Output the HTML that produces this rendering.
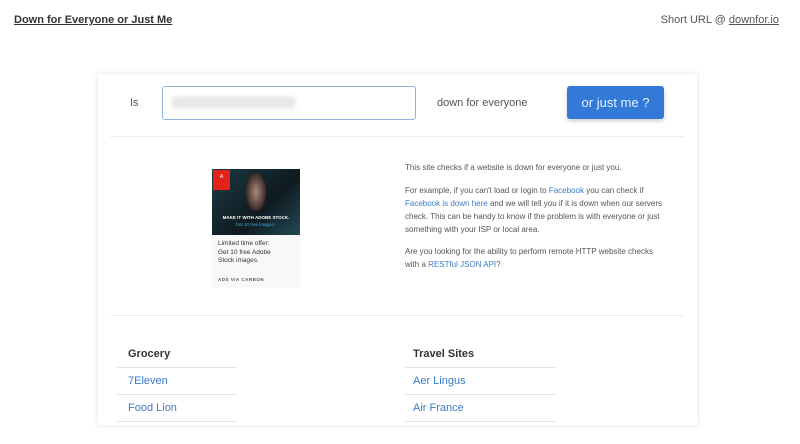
<!DOCTYPE html>
<html><head><meta charset="utf-8"><style>
*{margin:0;padding:0;box-sizing:border-box}
body{width:800px;height:444px;background:#fff;font-family:"Liberation Sans",sans-serif;position:relative;overflow:hidden;color:#444}
.a{position:absolute;white-space:nowrap}
a{color:#3a7bc8;text-decoration:none}
.card{position:absolute;left:98px;top:74px;width:599px;height:351px;background:#fff;box-shadow:0 0 6px rgba(0,0,0,.12)}
.hr{position:absolute;height:1px;background:#eee}
.p{font-size:8px;line-height:13px;color:#555;position:absolute;left:405px;white-space:nowrap}
.li{position:absolute;height:1px;background:#e4e4e4}
</style></head><body>
<div class="a" style="left:14px;top:14px;font-size:11px;font-weight:bold;color:#333;text-decoration:underline">Down for Everyone or Just Me</div>
<div class="a" style="right:21px;top:14px;font-size:11px;color:#555">Short URL @ <span style="text-decoration:underline">downfor.io</span></div>
<div class="card"></div>
<div class="a" style="left:130px;top:97px;font-size:11px;color:#555">Is</div>
<div class="a" style="left:162px;top:86px;width:254px;height:34px;border:1px solid #8fb4e0;border-radius:3px;background:#fff"><div style="position:absolute;left:8px;top:9px;width:125px;height:13px;background:#e8e8e8;border-radius:6px;filter:blur(2px)"></div></div>
<div class="a" style="left:437px;top:97px;font-size:11px;color:#555">down for everyone</div>
<div class="a" style="left:567px;top:86px;width:97px;height:33px;background:#3279d8;border-radius:3px;color:#e8f0ff;font-size:13px;text-align:center;line-height:33px;box-shadow:0 2px 5px rgba(0,0,0,.2)">or just me ?</div>
<div class="hr" style="left:110px;top:136px;width:575px"></div>
<div class="a" style="left:212px;top:169px;width:88px;height:119px;background:#f8f8f8">
<div style="position:absolute;left:0;top:0;width:88px;height:66px;background:linear-gradient(135deg,#1c3a44,#0f1a20 60%,#234a55)"></div>
<div style="position:absolute;left:34px;top:4px;width:20px;height:38px;background:radial-gradient(ellipse at center,#a88a7a,#3a2a25 70%,transparent 72%)"></div>
<div style="position:absolute;left:1px;top:1px;width:17px;height:20px;background:#e2231a;color:#fff;font-size:5px;text-align:center;padding-top:4px">A</div>
<div style="position:absolute;left:0;top:46px;width:88px;font-size:4.5px;font-weight:bold;color:#fff;text-align:center">MAKE IT WITH ADOBE STOCK.</div>
<div style="position:absolute;left:0;top:53px;width:88px;font-size:4.5px;color:#3ab0e0;text-align:center">Get 10 free images ›</div>
<div style="position:absolute;left:6px;top:71px;font-size:6.5px;line-height:8.5px;color:#333">Limited time offer:<br>Get 10 free Adobe<br>Stock images.</div>
<div style="position:absolute;left:6px;top:108px;font-size:4.5px;font-weight:bold;letter-spacing:.5px;color:#555">ADS VIA CARBON</div>
</div>
<div class="p" style="top:161px">This site checks if a website is down for everyone or just you.</div>
<div class="p" style="top:184px">For example, if you can't load or login to <a>Facebook</a> you can check if<br><a>Facebook is down here</a> and we will tell you if it is down when our servers<br>check. This can be handy to know if the problem is with everyone or just<br>something with your ISP or local area.</div>
<div class="p" style="top:245px">Are you looking for the ability to perform remote HTTP website checks<br>with a <a>RESTful JSON API</a>?</div>
<div class="hr" style="left:110px;top:315px;width:575px"></div>
<div class="a" style="left:128px;top:348px;font-size:11px;font-weight:bold;color:#333">Grocery</div>
<div class="li" style="left:117px;top:367px;width:120px"></div>
<div class="a" style="left:128px;top:375px;font-size:11px"><a>7Eleven</a></div>
<div class="li" style="left:117px;top:394px;width:120px"></div>
<div class="a" style="left:128px;top:402px;font-size:11px"><a>Food Lion</a></div>
<div class="li" style="left:117px;top:421px;width:120px"></div>
<div class="a" style="left:413px;top:348px;font-size:11px;font-weight:bold;color:#333">Travel Sites</div>
<div class="li" style="left:405px;top:367px;width:151px"></div>
<div class="a" style="left:413px;top:375px;font-size:11px"><a>Aer Lingus</a></div>
<div class="li" style="left:405px;top:394px;width:151px"></div>
<div class="a" style="left:413px;top:402px;font-size:11px"><a>Air France</a></div>
<div class="li" style="left:405px;top:421px;width:151px"></div>
</body></html>
